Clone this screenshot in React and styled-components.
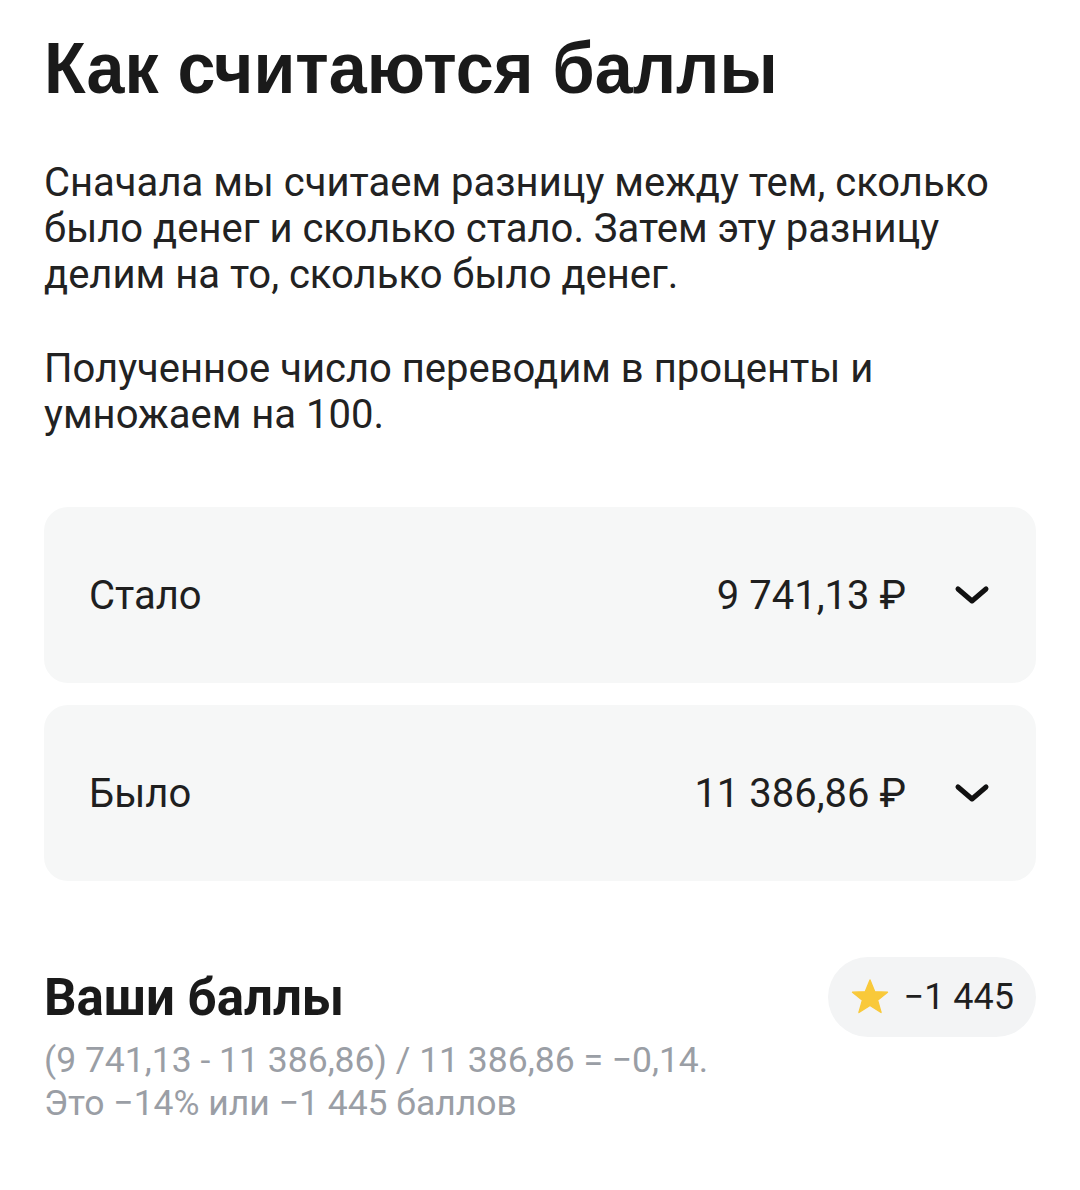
import styled, { createGlobalStyle } from "styled-components";

const GlobalStyle = createGlobalStyle`
  html, body {
    margin: 0;
    padding: 0;
    background: #ffffff;
  }
  body {
    font-family: Roboto, "Noto Sans", sans-serif;
    color: #1f1f1f;
  }
`;

const amounts = [
  { label: "Стало", value: "9 741,13 ₽" },
  { label: "Было", value: "11 386,86 ₽" },
];

function Chevron() {
  return (
    <svg width="36" height="22" viewBox="0 0 36 22" fill="none">
      <path
        d="M4 5 L18 17 L32 5"
        stroke="#111"
        strokeWidth="5"
        strokeLinecap="round"
        strokeLinejoin="round"
      />
    </svg>
  );
}

function Star() {
  return (
    <svg width="40" height="38" viewBox="0 0 24 23">
      <path
        d="M12 1.2 L14.9 8.3 L22.6 8.6 L16.6 13.4 L18.7 20.9 L12 16.6 L5.3 20.9 L7.4 13.4 L1.4 8.6 L9.1 8.3 Z"
        fill="#f9c93a"
        stroke="#f9c93a"
        strokeWidth="0.8"
        strokeLinejoin="round"
      />
    </svg>
  );
}

export default function App() {
  return (
    <Page>
      <GlobalStyle />
      <Title>
        <span>Как считаются баллы</span>
      </Title>
      <Text>
        Сначала мы считаем разницу между тем, сколько было денег и сколько
        стало. Затем эту разницу делим на то, сколько было денег.
      </Text>
      <Text>Полученное число переводим в проценты и умножаем на 100.</Text>

      <Cards>
        {amounts.map((item) => (
          <AmountCard key={item.label}>
            <Label>{item.label}</Label>
            <Value>{item.value}</Value>
            <Chevron />
          </AmountCard>
        ))}
      </Cards>

      <ScoreHeader>
        <ScoreTitle>Ваши баллы</ScoreTitle>
        <ScorePill>
          <Star />
          <span>−1 445</span>
        </ScorePill>
      </ScoreHeader>
      <Formula>
        (9 741,13 - 11 386,86) / 11 386,86 = −0,14.
        <br />
        Это −14% или −1 445 баллов
      </Formula>
    </Page>
  );
}

const Page = styled.div`
  width: 1080px;
  min-height: 1190px;
  box-sizing: border-box;
  padding: 24px 44px 0 44px;
`;

const Title = styled.h1`
  margin: 0 0 48px 0;
  font-family: "Liberation Sans", Arial, sans-serif;
  font-weight: 700;
  font-size: 73px;
  line-height: 88px;
  color: #1a1a1a;
  white-space: nowrap;

  span {
    display: inline-block;
    transform: scaleX(0.935);
    transform-origin: left center;
  }
`;

const Text = styled.p`
  margin: 0 0 48px 0;
  font-size: 40px;
  line-height: 46px;
  color: #222;
`;

const Cards = styled.div`
  display: flex;
  flex-direction: column;
  gap: 22px;
  margin-top: 69px;
`;

const AmountCard = styled.div`
  height: 176px;
  box-sizing: border-box;
  background: #f6f7f7;
  border-radius: 24px;
  padding: 0 46px 0 45px;
  display: flex;
  align-items: center;
  gap: 48px;
`;

const Label = styled.span`
  flex: 1;
  font-size: 40px;
  color: #1f1f1f;
`;

const Value = styled.span`
  font-size: 40px;
  color: #1f1f1f;
`;

const ScoreHeader = styled.div`
  display: flex;
  align-items: center;
  justify-content: space-between;
  margin-top: 76px;
`;

const ScoreTitle = styled.h2`
  margin: 0;
  font-family: Roboto, sans-serif;
  font-weight: 700;
  font-size: 51px;
  color: #1a1a1a;
`;

const ScorePill = styled.div`
  height: 80px;
  box-sizing: border-box;
  padding: 0 22px 0 22px;
  border-radius: 40px;
  background: #f3f4f5;
  display: flex;
  align-items: center;
  gap: 14px;
  font-size: 36px;
  color: #1f1f1f;
`;

const Formula = styled.p`
  margin: 2px 0 0 0;
  font-size: 35.5px;
  line-height: 43px;
  color: #9a9ea5;
`;
